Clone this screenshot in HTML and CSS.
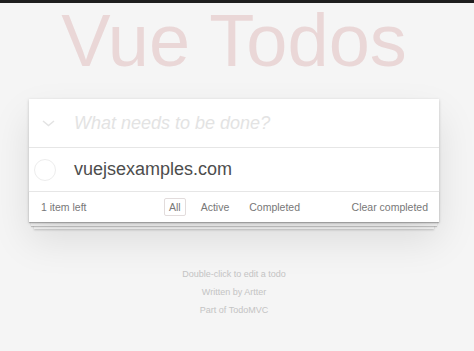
FILE: index.html
```html
<!DOCTYPE html>
<html lang="en">
<head>
  <meta charset="UTF-8">
  <meta name="viewport" content="width=device-width, initial-scale=1.0">
  <title>Vue Todos</title>
  <link rel="stylesheet" href="styles.css">
</head>
<body>
  <div class="topbar"></div>
  <section class="todoapp">
    <h1 class="title">Vue Todos</h1>
    <div class="card">
      <header class="new-row">
        <span class="toggle-all">
          <svg width="13" height="7" viewBox="0 0 13 7">
            <polyline points="1,1 6.5,5.5 12,1" fill="none" stroke="#e3e3e3" stroke-width="1.5"/>
          </svg>
        </span>
        <input class="new-todo" type="text" placeholder="What needs to be done?">
      </header>
      <ul class="todo-list">
        <li class="todo">
          <span class="check"><span class="circle"></span></span>
          <label>vuejsexamples.com</label>
        </li>
      </ul>
      <footer class="footer">
        <span class="count">1 item left</span>
        <ul class="filters">
          <li><a href="#/all" class="selected">All</a></li>
          <li><a href="#/active">Active</a></li>
          <li><a href="#/completed">Completed</a></li>
        </ul>
        <button class="clear">Clear completed</button>
      </footer>
    </div>
    <footer class="info">
      <p>Double-click to edit a todo</p>
      <p>Written by Artter</p>
      <p>Part of TodoMVC</p>
    </footer>
  </section>
</body>
</html>
```

FILE: styles.css
```css
body {
  margin: 0;
  padding: 0;
  background: #f5f5f5;
  color: #4d4d4d;
  font-family: "Liberation Sans", Arial, sans-serif;
}

.topbar {
  height: 3px;
  background: #1e1e1e;
}

.todoapp {
  width: 410px;
  margin-left: 29px;
}

.title {
  margin: 1px -10px 21px;
  font-size: 74px;
  font-weight: 400;
  line-height: 74px;
  text-align: center;
  color: rgba(175, 47, 47, 0.15);
}

.card {
  position: relative;
  background: #fff;
  box-shadow: 0 1px 3px rgba(0, 0, 0, 0.2), 0 18px 37px rgba(0, 0, 0, 0.1);
}

.new-row {
  display: flex;
  align-items: center;
  height: 48px;
}

.toggle-all {
  width: 45px;
  padding-left: 13px;
  box-sizing: border-box;
  display: flex;
  align-items: center;
}

.new-todo {
  flex: 1;
  border: none;
  outline: none;
  padding: 12px 12px 12px 0;
  font-family: inherit;
  font-size: 18px;
  line-height: 24px;
  color: #4d4d4d;
  background: transparent;
}

.new-todo::placeholder {
  font-style: italic;
  color: #e3e3e3;
}

.todo-list {
  list-style: none;
  margin: 0;
  padding: 0;
  border-top: 1px solid #e6e6e6;
}

.todo {
  display: flex;
  align-items: center;
}

.check {
  width: 45px;
  padding-left: 5px;
  box-sizing: border-box;
}

.circle {
  display: block;
  width: 20px;
  height: 20px;
  border: 1px solid #ededed;
  border-radius: 50%;
}

.todo label {
  font-size: 18px;
  line-height: 21px;
  padding: 11px 0;
  color: #4d4d4d;
}

.footer {
  display: grid;
  grid-template-columns: 1fr auto 1fr;
  align-items: center;
  height: 30px;
  padding: 0 11px 0 12px;
  border-top: 1px solid #e6e6e6;
  font-size: 10.5px;
  color: #777;
}

.footer::before {
  content: '';
  position: absolute;
  left: 0;
  right: 0;
  bottom: 0;
  height: 31px;
  z-index: -1;
  box-shadow: 0 1px 1px rgba(0, 0, 0, 0.2),
              0 6px 0 -2px #f6f6f6,
              0 7px 1px -2px rgba(0, 0, 0, 0.2),
              0 12px 0 -5px #f6f6f6,
              0 13px 2px -5px rgba(0, 0, 0, 0.2);
}

.filters {
  list-style: none;
  margin: 0;
  padding: 0;
  display: flex;
  gap: 10px;
}

.filters a {
  display: block;
  padding: 2px 4px;
  border: 1px solid transparent;
  border-radius: 2px;
  color: inherit;
  text-decoration: none;
}

.filters a.selected {
  border-color: #e2dcdc;
}

.clear {
  justify-self: end;
  border: none;
  background: none;
  padding: 0;
  font-family: inherit;
  font-size: 10.5px;
  color: #777;
}

.info {
  margin-top: 43px;
  text-align: center;
  font-size: 9px;
  line-height: 18px;
  color: #c4c4c4;
}

.info p {
  margin: 0;
}
```
